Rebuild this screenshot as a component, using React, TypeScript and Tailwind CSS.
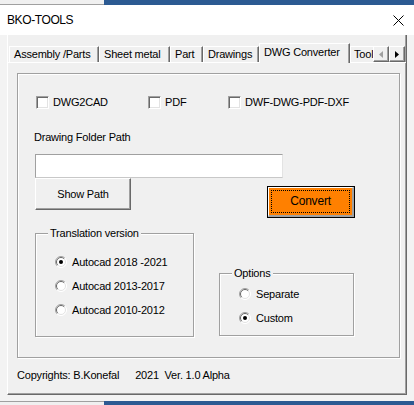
import type { ReactNode } from 'react'

function CheckBox({ label, w }: { label: string; w: string }) {
  return (
    <div className={`flex items-center gap-[4px] ${w}`}>
      <span className="block h-[13px] w-[13px] border border-t-[#a0a0a0] border-l-[#a0a0a0] border-r-white border-b-white bg-white shadow-[inset_1px_1px_0_#696969,inset_-1px_-1px_0_#e3e3e3]" />
      <span>{label}</span>
    </div>
  )
}

function Radio({ label, on }: { label: string; on?: boolean }) {
  return (
    <div className="flex h-[12px] items-center gap-[5px]">
      <svg width="12" height="12" viewBox="0 0 12 12">
        <circle cx="6" cy="6" r="5.5" fill="#fff" />
        <path d="M2.1 9.9 A5.5 5.5 0 0 1 9.9 2.1" fill="none" stroke="#a0a0a0" />
        <path d="M2.8 9.2 A4.5 4.5 0 0 1 9.2 2.8" fill="none" stroke="#696969" />
        <path d="M9.9 2.1 A5.5 5.5 0 0 1 2.1 9.9" fill="none" stroke="#ffffff" />
        <path d="M9.2 2.8 A4.5 4.5 0 0 1 2.8 9.2" fill="none" stroke="#e3e3e3" />
        {on && <circle cx="6" cy="6" r="2" fill="#000" />}
      </svg>
      <span className="leading-[13px]">{label}</span>
    </div>
  )
}

function Frame({ title, className, children }: { title: string; className: string; children: ReactNode }) {
  return (
    <div
      className={`relative border border-[#a0a0a0] shadow-[1px_1px_0_#fff,inset_1px_1px_0_#fff] ${className}`}
    >
      <span className="absolute -top-[7px] left-[12px] bg-[#f0f0f0] px-[2px] leading-[13px]">{title}</span>
      {children}
    </div>
  )
}

function Tab({ label, w, active }: { label: string; w: string; active?: boolean }) {
  if (active) {
    return (
      <div
        className={`relative z-10 -mb-px flex h-[20px] ${w} items-start border-t border-l border-r border-white border-r-[#696969] bg-[#f0f0f0] pt-[2px] pl-[4px] shadow-[inset_-1px_0_0_#a0a0a0]`}
      >
        {label}
      </div>
    )
  }
  return (
    <div
      className={`flex h-[16px] ${w} items-center overflow-hidden whitespace-nowrap border-t border-l border-r border-white border-r-[#696969] pl-[4px] shadow-[inset_-1px_0_0_#a0a0a0]`}
    >
      {label}
    </div>
  )
}

function ScrollBtn({ dir }: { dir: 'l' | 'r' }) {
  return (
    <div className="flex h-[16px] w-[16px] items-center justify-center border border-white border-r-[#696969] border-b-[#696969] bg-[#f0f0f0] shadow-[inset_-1px_-1px_0_#a0a0a0]">
      <svg width="4" height="7" viewBox="0 0 4 7">
        {dir === 'l' ? (
          <path d="M4 0 L0 3.5 L4 7 Z" fill="#a0a0a0" />
        ) : (
          <path d="M0 0 L4 3.5 L0 7 Z" fill="#000" />
        )}
      </svg>
    </div>
  )
}

export default function App() {
  return (
    <div className="flex h-[405px] w-[414px] flex-col overflow-hidden bg-[#f3f3f3] font-['Liberation_Sans',Arial,sans-serif] text-[11px] leading-[13px] tracking-[-0.2px] text-black">
      {/* strip of the window behind */}
      <div className="flex h-[5px]">
        <div className="w-[104px] border-b border-[#a0a0a0] bg-[#f0f0f0]" />
        <div className="flex-1 bg-[#2c5a92]" />
      </div>

      {/* title bar */}
      <div className="flex h-[30px] items-center justify-between bg-white pl-[7px] pr-[10px]">
        <span className="text-[12px] tracking-[-0.4px]">BKO-TOOLS</span>
        <svg width="11" height="11" viewBox="0 0 11 11">
          <path d="M0.5 0.5 L10.5 10.5 M10.5 0.5 L0.5 10.5" stroke="#000" strokeWidth="1" />
        </svg>
      </div>

      <div className="flex h-[360px]">
        <div className="w-[7px]" />
        <div className="flex w-[400px] flex-col border-l border-r border-b border-l-white border-r-[#696969] border-b-[#696969] bg-[#f0f0f0] shadow-[inset_-1px_-1px_0_#a0a0a0]">
          {/* tabs */}
          <div className="mt-[8px] flex h-[19px] items-end pl-[1px]">
            <Tab label="Assembly /Parts" w="w-[90px]" />
            <Tab label="Sheet metal" w="w-[71px]" />
            <Tab label="Part" w="w-[33px]" />
            <Tab label="Drawings" w="w-[56px]" />
            <Tab label="DWG Converter" w="w-[91px]" active />
            <div className="flex h-[16px] w-[23px] items-center overflow-hidden whitespace-nowrap border-t border-l border-white pl-[3px]">
              Tool
            </div>
            <div className="flex h-[16px] self-end">
              <ScrollBtn dir="l" />
              <ScrollBtn dir="r" />
            </div>
          </div>

          <div className="border-t border-white">
            {/* page */}
            <div className="ml-[9px] mt-[10px] h-[285px] w-[383px] border border-[#a0a0a0] shadow-[1px_1px_0_#fff,inset_1px_1px_0_#fff]">
              <div className="mt-[22px] flex pl-[18px]">
                <CheckBox label="DWG2CAD" w="w-[112px]" />
                <CheckBox label="PDF" w="w-[80px]" />
                <CheckBox label="DWF-DWG-PDF-DXF" w="w-auto" />
              </div>

              <div className="mt-[22px] pl-[16px]">Drawing Folder Path</div>

              <div className="ml-[17px] mt-[10px] h-[24px] w-[248px] border border-t-[#a0a0a0] border-l-[#a0a0a0] border-r-[#e3e3e3] border-b-[#c8c8c8] bg-white" />

              <div className="flex items-start">
                <button className="ml-[17px] flex h-[32px] w-[96px] items-center justify-center border border-t-white border-l-white border-r-[#696969] border-b-[#696969] bg-[#f0f0f0] shadow-[inset_-1px_-1px_0_#a0a0a0]">
                  Show Path
                </button>
                <button className="ml-[136px] mt-[8px] h-[32px] w-[88px] border border-black bg-[#ff8000]">
                  <div className="h-full w-full border-t border-l border-r-2 border-b-2 border-t-white border-l-white border-r-[#a0a0a0] border-b-[#a0a0a0] p-[2px]">
                    <div className="flex h-full w-full items-center justify-center border border-dotted border-black text-[12px]">
                      Convert
                    </div>
                  </div>
                </button>
              </div>

              <div className="mt-[15px] flex items-start">
                <Frame title="Translation version" className="ml-[17px] h-[104px] w-[159px]">
                  <div className="flex flex-col gap-[12px] pl-[19px] pt-[22px]">
                    <Radio label="Autocad 2018 -2021" on />
                    <Radio label="Autocad 2013-2017" />
                    <Radio label="Autocad 2010-2012" />
                  </div>
                </Frame>
                <Frame title="Options" className="ml-[25px] mt-[40px] h-[63px] w-[135px]">
                  <div className="flex flex-col gap-[12px] pl-[19px] pt-[14px]">
                    <Radio label="Separate" />
                    <Radio label="Custom" on />
                  </div>
                </Frame>
              </div>
            </div>

            <div className="ml-[9px] mt-[11px] flex whitespace-pre">
              <span>Copyrights: B.Konefal</span>
              <span className="ml-[16px]">2021  Ver. 1.0 Alpha</span>
            </div>
          </div>
        </div>
      </div>

      <div className="h-[6px]" />
      <div className="flex flex-1">
        <div className="w-[104px] border-t border-[#a0a0a0] bg-[#f0f0f0]" />
        <div className="flex-1 bg-[#2c5a92]" />
      </div>
    </div>
  )
}
